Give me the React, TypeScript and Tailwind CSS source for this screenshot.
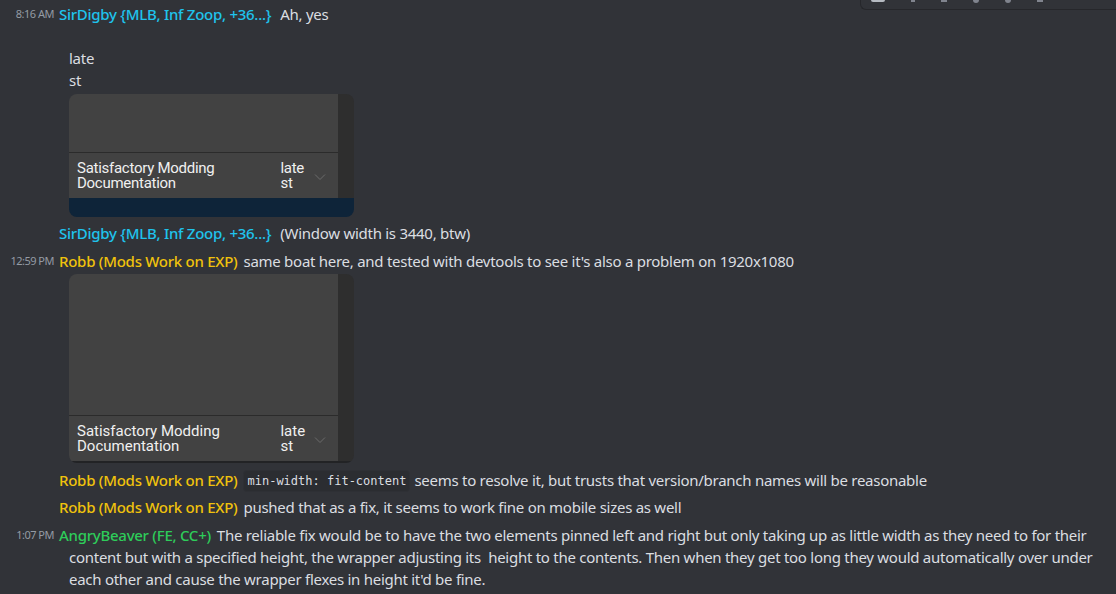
import React from "react";

const font = { fontFamily: '"Noto Sans", "Open Sans", sans-serif' };

function Chevron() {
  return (
    <svg width="12" height="8" viewBox="0 0 12 8" className="shrink-0">
      <path d="M1 1.5 L6 6.5 L11 1.5" fill="none" stroke="#6b6b6b" strokeWidth="1" />
    </svg>
  );
}

function EmbedRow() {
  return (
    <div className="flex items-center h-[45px] pl-[8px] pr-[12px] bg-[#424242] text-[15px] leading-[15px] text-[#f0f0f0]" style={{ fontFamily: 'Roboto, "Noto Sans", sans-serif' }}>
      <div className="w-[206px]">
        Satisfactory Modding
        <br />
        Documentation
      </div>
      <div className="w-[34px]">
        late
        <br />
        st
      </div>
      <div className="pt-[2px]">
        <Chevron />
      </div>
    </div>
  );
}

function Embed({ topH, bottom }: { topH: number; bottom: "navy" | "thin" }) {
  return (
    <div className="w-[285px] rounded-[8px] overflow-hidden flex flex-col">
      <div className="flex">
        <div className="w-[269px] flex flex-col">
          <div className="bg-[#424242] border-b border-[#2b2b2b]" style={{ height: topH }} />
          <EmbedRow />
        </div>
        <div className="w-[16px] bg-[#2e2e2e]" />
      </div>
      {bottom === "navy" ? (
        <div className="h-[19px] bg-[#0e2439]" />
      ) : (
        <div className="h-[2px] bg-[#222325]" />
      )}
    </div>
  );
}

function Msg({
  time,
  name,
  color,
  children,
  className = "",
  gap = "mr-[6px]",
}: {
  time?: string;
  name: string;
  color: string;
  children: React.ReactNode;
  className?: string;
  gap?: string;
}) {
  return (
    <div className={"flex " + className}>
      <div className="w-[55px] shrink-0 text-right pr-[1px] text-[11px] leading-[22px] tracking-[-0.5px] text-[#949ba4]">
        {time ?? ""}
      </div>
      <div className="flex-1 pl-[14px] pr-[20px] indent-[-10px] text-[15px] leading-[22px] tracking-[-0.27px] text-[#dbdee1]">
        <span className={"font-medium " + gap} style={{ color }}>
          {name}
        </span>
        {children}
      </div>
    </div>
  );
}

export default function App() {
  const cyan = "#1fc3ec";
  const yellow = "#f0c20c";
  const green = "#2ecc5a";
  return (
    <div className="relative w-[1116px] h-[594px] overflow-hidden bg-[#313338]" style={font}>
      <div className="absolute top-0 right-0 w-[256px] h-[10px] border-l border-b border-[#26272b] rounded-bl-[6px] bg-[#313338] flex items-start gap-[26px] pl-[10px]">
        <span className="w-[14px] h-[2px] bg-[#b5bac1] rounded-b" />
        <span className="w-[4px] h-[2px] bg-[#80848e]" />
        <span className="w-[6px] h-[2px] bg-[#80848e]" />
        <span className="w-[6px] h-[3px] bg-[#80848e] rounded-b" />
        <span className="w-[6px] h-[3px] bg-[#80848e] rounded-b" />
        <span className="w-[6px] h-[2px] bg-[#80848e]" />
      </div>

      <div className="pt-[3px]">
        <Msg time="8:16 AM" name="SirDigby {MLB, Inf Zoop, +36...}" color={cyan} gap="mr-[9px]">
          Ah, yes
        </Msg>
        <div className="pl-[69px] text-[15px] leading-[22px] tracking-[-0.27px] text-[#dbdee1]">
          <div className="h-[22px]" />
          <div>late</div>
          <div>st</div>
          <div className="mt-[3px]">
            <Embed topH={59} bottom="navy" />
          </div>
        </div>

        <Msg name="SirDigby {MLB, Inf Zoop, +36...}" color={cyan} className="mt-[5px]" gap="mr-[9px]">
          (Window width is 3440, btw)
        </Msg>

        <Msg time="12:59 PM" name="Robb (Mods Work on EXP)" color={yellow} className="mt-[6px]">
          same boat here, and tested with devtools to see it's also a problem on 1920x1080
        </Msg>
        <div className="pl-[69px] mt-[2px]">
          <Embed topH={142} bottom="thin" />
        </div>

        <Msg name="Robb (Mods Work on EXP)" color={yellow} className="mt-[6px]">
          <code
            className="indent-0 inline-block px-[3px] py-[1px] mr-[4px] rounded-[4px] bg-[#2b2d31] border border-[#2e3035] text-[12px] leading-[18px] tracking-normal text-[#dbdee1] align-[1px]"
            style={{ fontFamily: '"DejaVu Sans Mono", "Liberation Mono", monospace' }}
          >
            min-width: fit-content
          </code>
          seems to resolve it, but trusts that version/branch names will be reasonable
        </Msg>

        <Msg name="Robb (Mods Work on EXP)" color={yellow} className="mt-[4px]">
          pushed that as a fix, it seems to work fine on mobile sizes as well
        </Msg>

        <Msg time="1:07 PM" name="AngryBeaver (FE, CC+)" color={green} className="mt-[6px]">
          The reliable fix would be to have the two elements pinned left and right but only taking up as little width as they need to for their content but with a specified height, the wrapper adjusting its&nbsp; height to the contents. Then when they get too long they would automatically over under each other and cause the wrapper flexes in height it'd be fine.
        </Msg>
      </div>
    </div>
  );
}
